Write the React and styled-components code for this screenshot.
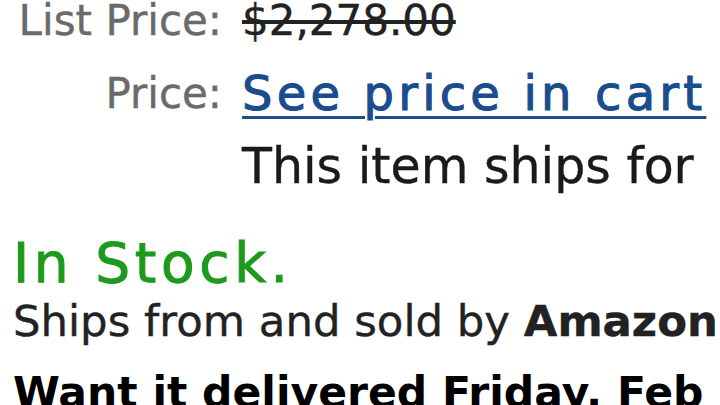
import styled, { createGlobalStyle } from "styled-components";

const GlobalStyle = createGlobalStyle`
  html, body {
    margin: 0;
    padding: 0;
    background: #fff;
    overflow: hidden;
  }
  body {
    font-family: "DejaVu Sans", Verdana, sans-serif;
    color: #000;
  }
`;

const Page = styled.div`
  width: 720px;
  height: 405px;
  overflow: hidden;
  white-space: nowrap;
  padding-left: 13px;
  box-sizing: border-box;
`;

const PriceTable = styled.div`
  display: grid;
  grid-template-columns: 209px auto;
  column-gap: 20px;
  margin-top: -16px;
`;

const Label = styled.div`
  text-align: right;
  color: #6a6a6a;
  font-size: 42px;
  line-height: 73px;
  -webkit-text-stroke: 0.4px #6a6a6a;
`;

const Value = styled.div`
  font-size: ${({ size }) => size || 49}px;
  line-height: 73px;
  color: #1a1a1a;
  -webkit-text-stroke: 0.4px currentColor;
`;

const StrikePrice = styled.span`
  text-decoration: line-through;
  color: #222;
`;

const CartLink = styled.a`
  color: #1a4d8d;
  font-size: 48px;
  text-decoration: underline;
  text-underline-offset: 6px;
  text-decoration-thickness: 3px;
  letter-spacing: 4.2px;
  -webkit-text-stroke: 1.1px #1a4d8d;
`;

const Availability = styled.div`
  padding-top: 25px;
`;

const InStock = styled.div`
  color: #1c9a1c;
  font-size: 55px;
  line-height: 70px;
  letter-spacing: 4.6px;
  -webkit-text-stroke: 1px #1c9a1c;
`;

const ShipsFrom = styled.div`
  font-size: 43.4px;
  line-height: 46px;
  color: #222;
  -webkit-text-stroke: 0.4px #222;
`;

const Delivery = styled.div`
  font-size: 42.5px;
  line-height: 50px;
  font-weight: bold;
  margin-top: 24px;
`;

export default function App() {
  return (
    <>
      <GlobalStyle />
      <Page>
        <PriceTable>
          <Label>List Price:</Label>
          <Value size={42}>
            <StrikePrice>$2,278.00</StrikePrice>
          </Value>
          <Label>Price:</Label>
          <Value>
            <CartLink href="#">See price in cart</CartLink>
          </Value>
          <span />
          <Value>This item ships for</Value>
        </PriceTable>
        <Availability>
          <InStock>In Stock.</InStock>
          <ShipsFrom>
            Ships from and sold by <b>Amazon</b>
          </ShipsFrom>
          <Delivery>Want it delivered Friday, Feb</Delivery>
        </Availability>
      </Page>
    </>
  );
}
